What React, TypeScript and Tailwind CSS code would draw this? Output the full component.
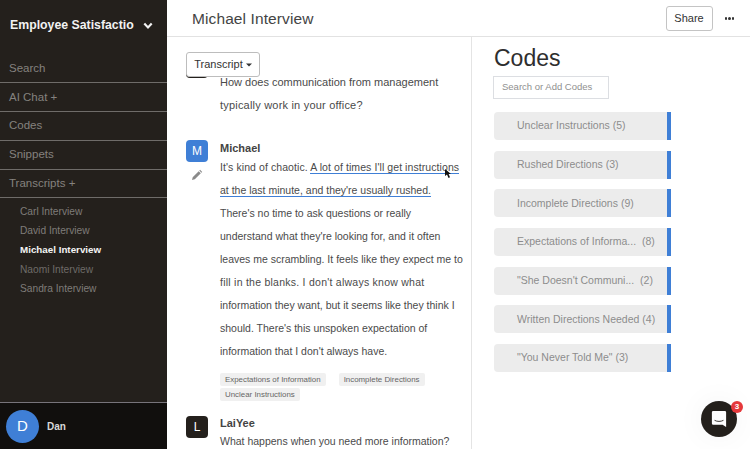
import React from "react";

const font = { fontFamily: '"Liberation Sans", Arial, sans-serif' };

function SideRow({ label }: { label: string }) {
  return (
    <div className="h-[28.8px] flex items-center pl-[9px] border-b-[1.5px] border-[#6f6c69] text-[11.5px] text-[#85827f]">
      {label}
    </div>
  );
}

function Avatar({ letter, bg }: { letter?: string; bg: string }) {
  return (
    <div className={`w-[22px] h-[22px] rounded-[4px] shrink-0 flex items-center justify-center text-white text-[12px] ${bg}`}>
      {letter}
    </div>
  );
}

function Tag({ label }: { label: string }) {
  return (
    <span className="h-[13px] px-[5px] flex items-center rounded-[2px] bg-[#f0f0f0] text-[7.9px] text-[#666666]">{label}</span>
  );
}

function Code({ label, count }: { label: string; count: string }) {
  return (
    <div className="w-[177px] h-[28px] flex items-center rounded-l-[4px] bg-[#ececec] border-r-4 border-[#3f7fd6] pl-[23px] text-[10.5px] text-[#8c8c8c] whitespace-pre">
      {label} {count}
    </div>
  );
}

const codes: [string, string][] = [
  ["Unclear Instructions", "(5)"],
  ["Rushed Directions", "(3)"],
  ["Incomplete Directions", "(9)"],
  ["Expectations of Informa...", " (8)"],
  ['"She Doesn\'t Communi...', " (2)"],
  ["Written Directions Needed", "(4)"],
  ['"You Never Told Me"', "(3)"],
];

export default function App() {
  return (
    <div style={font} className="relative w-[750px] h-[449px] overflow-hidden flex bg-white text-[#333333]">
      <aside className="w-[167px] shrink-0 flex flex-col bg-[#24201c]">
        <div className="h-[54.5px] flex items-center justify-between pl-[10px] pr-[14px] pb-[5px] text-[12.3px] font-bold text-[#f2f2f2] whitespace-nowrap">
          <span>Employee Satisfactio</span>
          <svg width="10" height="8" viewBox="0 0 10 8" className="mt-[3px]">
            <path d="M1.3 1.6 5 5.4 8.7 1.6" fill="none" stroke="#f2f2f2" strokeWidth="2.2" />
          </svg>
        </div>
        <SideRow label="Search" />
        <SideRow label="AI Chat +" />
        <SideRow label="Codes" />
        <SideRow label="Snippets" />
        <SideRow label="Transcripts +" />
        <div className="pl-[20px] pt-[3px] flex flex-col text-[10.2px] text-[#7f7c79]">
          <div className="h-[19.4px] flex items-center">Carl Interview</div>
          <div className="h-[19.4px] flex items-center">David Interview</div>
          <div className="h-[19.4px] flex items-center font-bold text-[9.8px] text-[#f4f4f4]">Michael Interview</div>
          <div className="h-[19.4px] flex items-center text-[#6e6b68]">Naomi Interview</div>
          <div className="h-[19.4px] flex items-center">Sandra Interview</div>
        </div>
        <div className="mt-auto h-[47px] flex items-center gap-[8px] pl-[6px] pt-[1px] border-t border-[#77747a] bg-[#110f0d]">
          <div className="w-[33px] h-[33px] rounded-full bg-[#3f7fd6] flex items-center justify-center text-white text-[15px]">D</div>
          <span className="text-[10px] font-bold text-[#d8d8d8]">Dan</span>
        </div>
      </aside>

      <main className="flex-1 flex flex-col min-w-0">
        <header className="h-[37px] shrink-0 flex items-center border-b border-[#e2e2e2] pl-[25px] pr-[16px] pt-[1px]">
          <h1 className="text-[15.5px] text-[#444444] tracking-[0.1px]">Michael Interview</h1>
          <button className="ml-auto w-[47px] h-[25px] rounded-[3px] border border-[#c4c4c4] text-[11px] text-[#333333]">Share</button>
          <div className="ml-[12px] flex gap-[1px]">
            <span className="w-[2.5px] h-[2.5px] rounded-full bg-[#333333]" />
            <span className="w-[2.5px] h-[2.5px] rounded-full bg-[#333333]" />
            <span className="w-[2.5px] h-[2.5px] rounded-full bg-[#333333]" />
          </div>
        </header>

        <div className="flex-1 flex min-h-0">
          <section className="relative w-[305px] shrink-0 border-r border-[#e4e4e4] overflow-hidden pl-[19px] pt-[19px] text-[10.5px] text-[#4a4a4a]">
            <div className="flex gap-[12px]">
              <Avatar bg="bg-[#24201c]" />
              <div className="pt-[15px] leading-[23px]">
                <p className="text-[11px]">How does communication from management</p>
                <p className="text-[11px] tracking-[0.2px]">typically work in your office?</p>
              </div>
            </div>

            <div className="flex gap-[12px] mt-[23px]">
              <div className="flex flex-col items-center shrink-0">
                <Avatar letter="M" bg="bg-[#3f7fd6]" />
                <svg width="12" height="12" viewBox="0 0 12 12" className="mt-[7px]">
                  <path d="M1 11l.7-2.8 6-6 2.1 2.1-6 6z M8.3 1.6l.8-.8 2.1 2.1-.8.8z" fill="#8a8a8a" />
                </svg>
              </div>
              <div className="w-[250px]">
                <div className="font-bold text-[11px] text-[#444444] leading-[15px] pt-[1px]">Michael</div>
                <div className="leading-[23px] whitespace-nowrap">
                  <p className="tracking-[0.08px]">It's kind of chaotic. <span className="border-b border-[#3f7fd6]">A lot of times I'll get instructions</span></p>
                  <p><span className="border-b border-[#3f7fd6]">at the last minute, and they're usually rushed.</span></p>
                  <p>There's no time to ask questions or really</p>
                  <p>understand what they're looking for, and it often</p>
                  <p>leaves me scrambling. It feels like they expect me to</p>
                  <p className="tracking-[0.25px]">fill in the blanks. I don't always know what</p>
                  <p>information they want, but it seems like they think I</p>
                  <p>should. There's this unspoken expectation of</p>
                  <p>information that I don't always have.</p>
                </div>
                <div className="mt-[10px] flex flex-col gap-[2px]">
                  <div className="flex gap-[13px]">
                    <Tag label="Expectations of Information" />
                    <Tag label="Incomplete Directions" />
                  </div>
                  <div className="flex">
                    <Tag label="Unclear Instructions" />
                  </div>
                </div>
              </div>
            </div>

            <div className="flex gap-[12px] mt-[15px]">
              <Avatar letter="L" bg="bg-[#24201c]" />
              <div>
                <div className="font-bold text-[11px] text-[#444444] leading-[15px]">LaiYee</div>
                <div className="leading-[23px] mt-[-1px] whitespace-nowrap">What happens when you need more information?</div>
              </div>
            </div>

            <button className="absolute left-[19px] top-[15px] w-[74px] h-[25px] flex items-center justify-center gap-[3px] rounded-[3px] border border-[#bdbdbd] bg-white text-[11px] text-[#333333]">
              Transcript
              <svg width="6" height="4" viewBox="0 0 6 4"><path d="M0 .5h6L3 3.5z" fill="#333333" /></svg>
            </button>
          </section>

          <section className="flex-1 pl-[22px] pt-[7px]">
            <h2 className="text-[23px] leading-[28px] text-[#2e2e2e]">Codes</h2>
            <div className="mt-[4px] -ml-px w-[116px] h-[23px] flex items-center pl-[8px] border border-[#dcdee2] text-[9.5px] text-[#8f8f8f]">
              Search or Add Codes
            </div>
            <div className="mt-[13px] flex flex-col gap-[10.7px]">
              {codes.map(([l, c]) => (
                <Code key={l} label={l} count={c} />
              ))}
            </div>
          </section>
        </div>
      </main>

      <div className="absolute left-[701px] top-[401px] w-[36px] h-[36px] rounded-full bg-[#24201c] flex items-center justify-center shadow-[0_0_30px_rgba(0,0,0,0.05)]">
        <svg width="16" height="16" viewBox="0 0 16 18">
          <path d="M1.5 0h13A1.5 1.5 0 0 1 16 1.5V18l-4-2.5H1.5A1.5 1.5 0 0 1 0 14V1.5A1.5 1.5 0 0 1 1.5 0z" fill="#ffffff" />
          <path d="M3 10.5c3 1.6 7 1.6 10 0" fill="none" stroke="#24201c" strokeWidth="1" />
        </svg>
      </div>
      <div className="absolute left-[731px] top-[401px] w-[12px] h-[12px] rounded-full bg-[#e5383b] flex items-center justify-center text-[8px] font-bold text-white">3</div>
      <svg width="8" height="9" viewBox="0 0 8 9" className="absolute left-[445px] top-[169px]">
        <path d="M0 0v7l2-1.5L3.5 9 5 8.3 3.6 5H6z" fill="#111111" />
      </svg>
    </div>
  );
}
